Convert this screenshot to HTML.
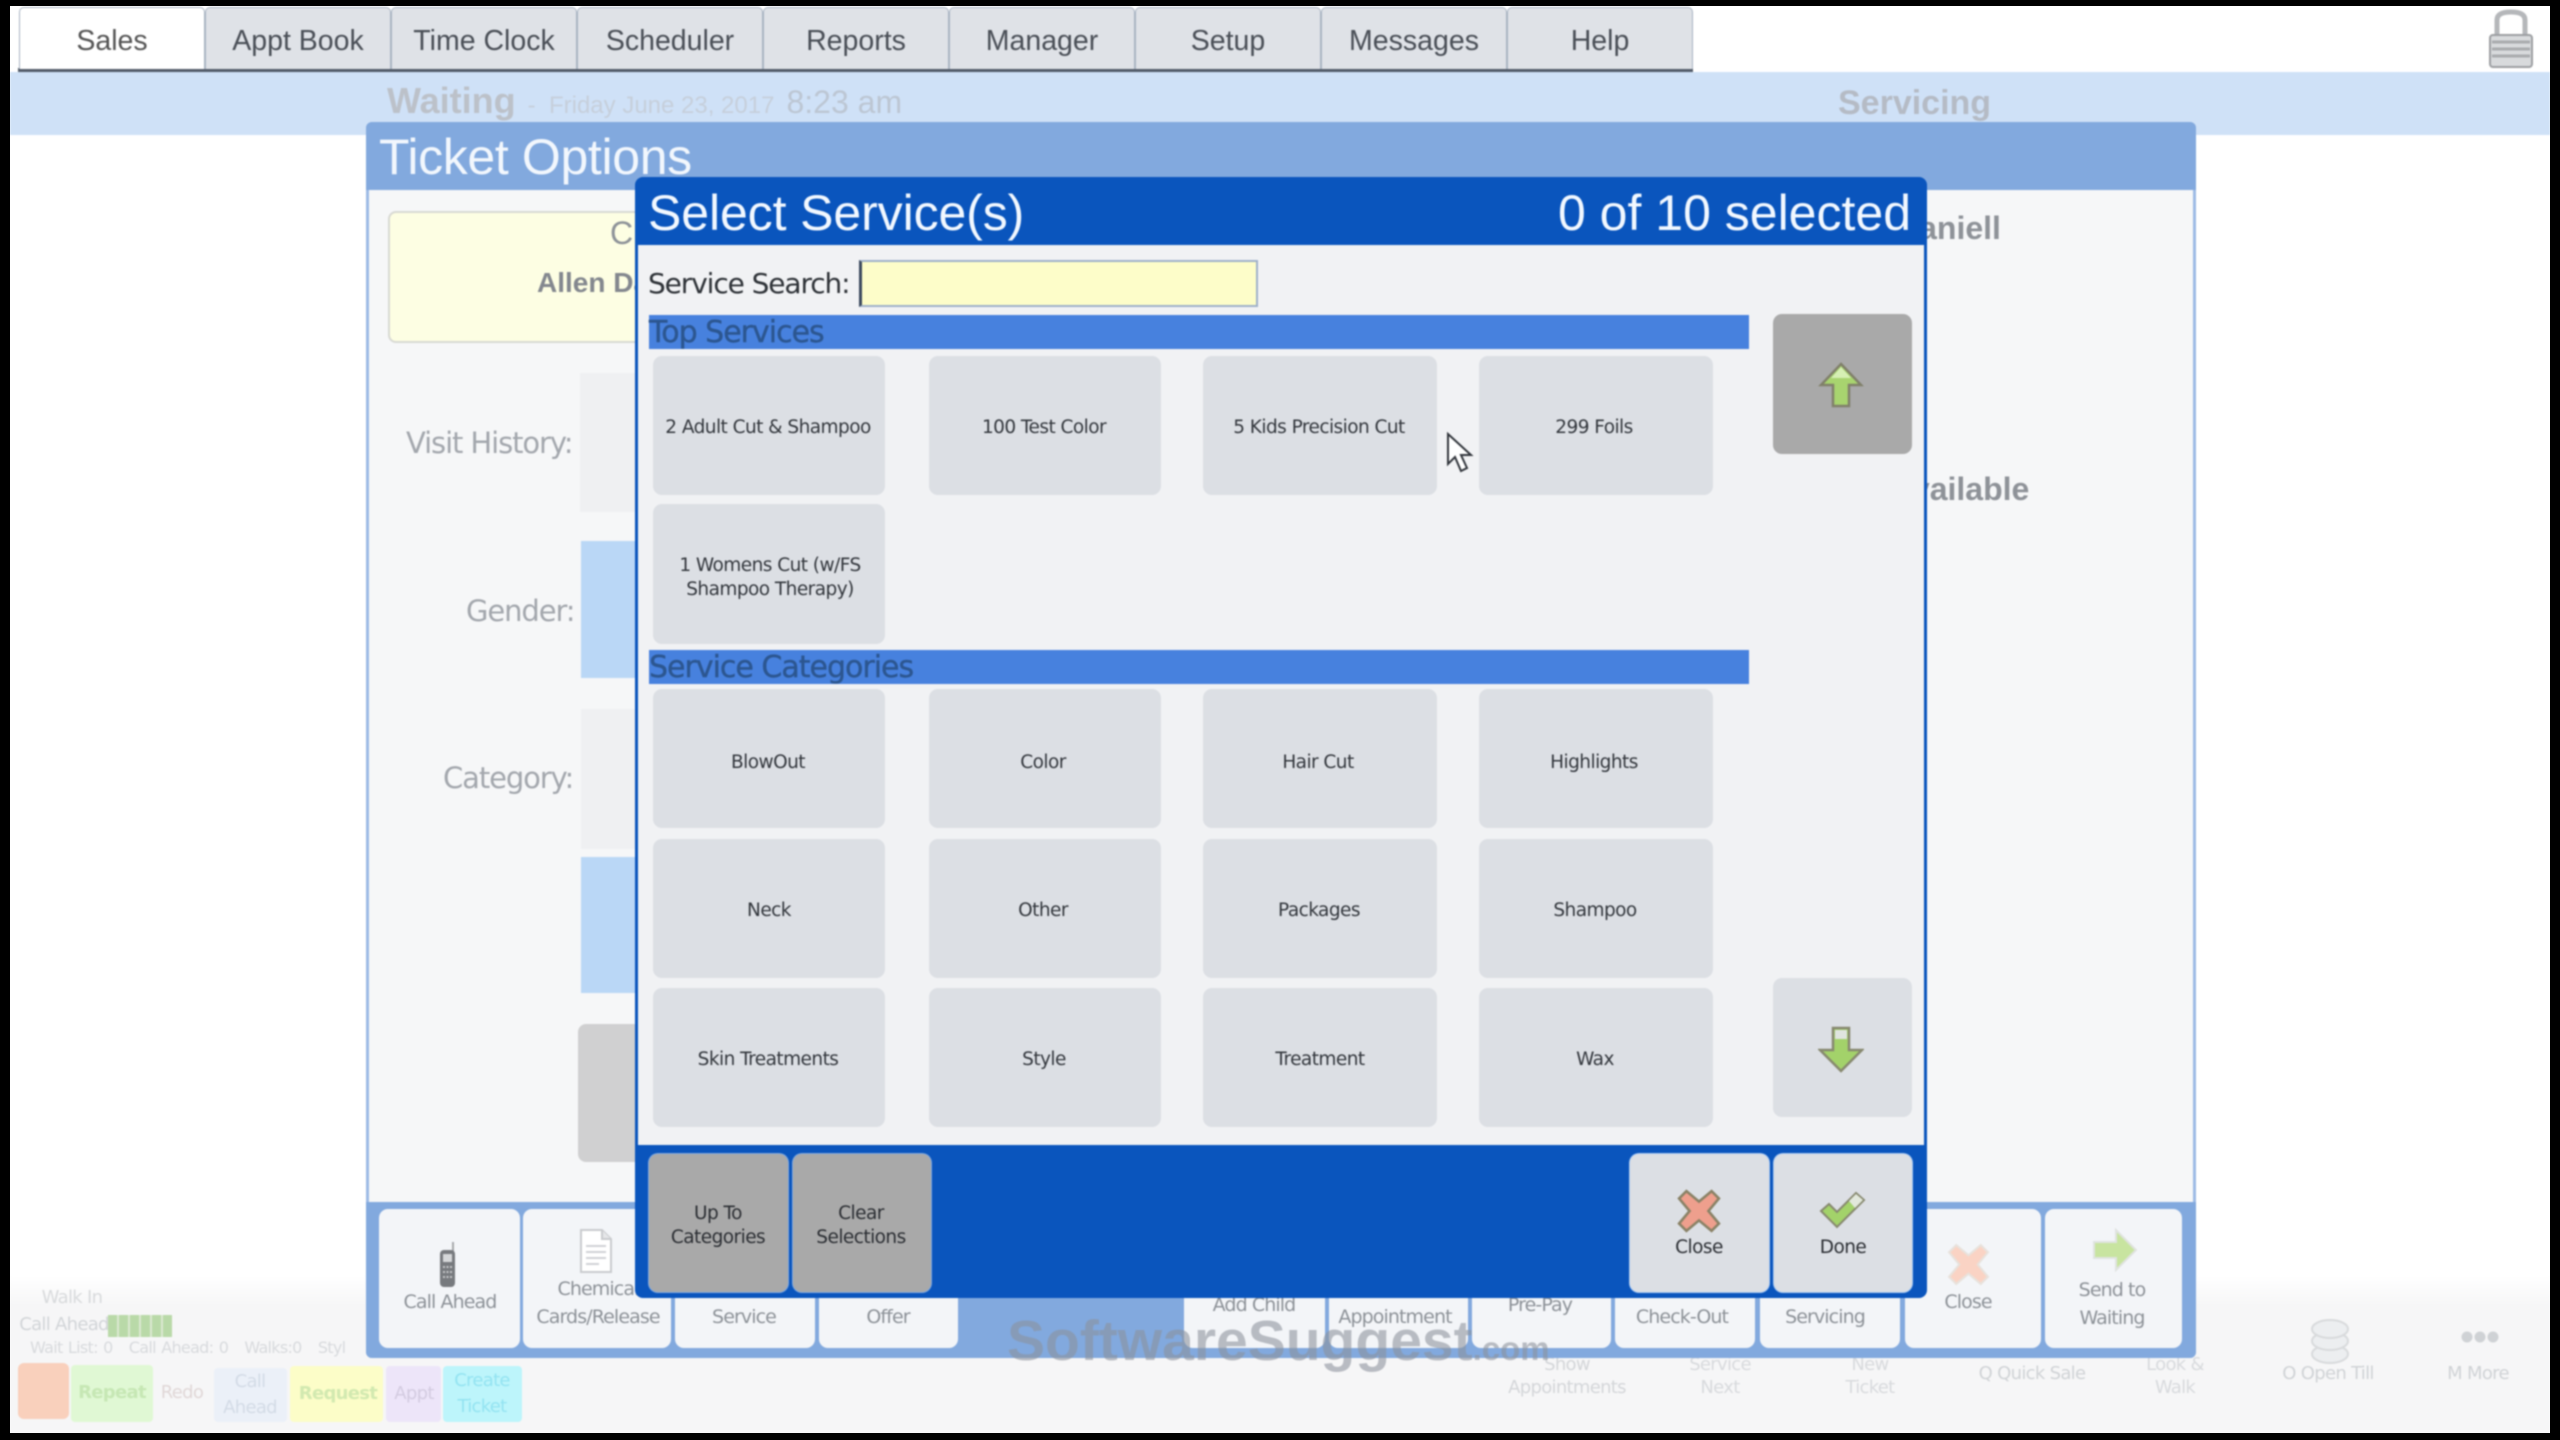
<!DOCTYPE html>
<html><head><meta charset="utf-8"><title>Select Service(s)</title>
<style>
html,body{margin:0;padding:0;background:#000}
body{width:2560px;height:1440px;overflow:hidden;position:relative;font-family:"Liberation Sans",sans-serif}
#s{position:absolute;left:10px;top:6px;width:2540px;height:1427px;background:#fff;overflow:hidden}
#p{position:absolute;left:-10px;top:-6px;width:2560px;height:1440px;filter:blur(.8px)}
.a{position:absolute}
.c{position:absolute;transform:translate(-50%,-50%);white-space:nowrap;text-align:center}
.tab{position:absolute;top:7px;height:61px;width:184px;background:#dfe2e7;border:1px solid #a9b4c2;border-bottom:none;border-radius:5px 5px 0 0;font-size:28.5px;color:#4a4f57;text-align:center;line-height:67px;box-sizing:content-box}
.b{position:absolute;background:#dcdfe4;border-radius:9px}
.d{font-family:"DejaVu Sans","Liberation Sans",sans-serif;font-size:18.5px;letter-spacing:-.55px;color:#33373d;line-height:24px}
.tb{position:absolute;top:1209px;height:139px;background:#f3f5f8;border-radius:9px}
.f{font-family:"DejaVu Sans","Liberation Sans",sans-serif;font-size:19px;letter-spacing:-.9px;color:#8d9298}
.l{font-family:"DejaVu Sans","Liberation Sans",sans-serif;font-size:29px;letter-spacing:-1.1px;color:#a3a7ad}
.k{font-family:"DejaVu Sans","Liberation Sans",sans-serif;font-size:18px;letter-spacing:-.7px;color:#dfe1e4;line-height:26px}
.h{font-family:"DejaVu Sans",sans-serif;font-size:30px;letter-spacing:-1px;color:#2c5690;white-space:nowrap;-webkit-text-stroke:.4px #2c5690}
</style></head><body><div id="s"><div id="p">

<!-- tabs -->
<div class="a" style="left:18px;top:68px;width:1675px;height:4px;background:#525b69"></div>
<div class="tab" style="left:19px;background:#fff;color:#555">Sales</div>
<div class="tab" style="left:205px">Appt Book</div>
<div class="tab" style="left:391px">Time Clock</div>
<div class="tab" style="left:577px">Scheduler</div>
<div class="tab" style="left:763px">Reports</div>
<div class="tab" style="left:949px">Manager</div>
<div class="tab" style="left:1135px">Setup</div>
<div class="tab" style="left:1321px">Messages</div>
<div class="tab" style="left:1507px">Help</div>

<!-- lock -->
<svg class="a" style="left:2486px;top:8px" width="50" height="62" viewBox="0 0 50 62">
<path d="M11 30V12Q11 4 25 4T39 12V30" fill="none" stroke="#b5b7ba" stroke-width="5"/>
<rect x="4" y="27" width="42" height="32" rx="3" fill="#d8dadc" stroke="#9d9fa2" stroke-width="2"/>
<path d="M6 34H44M6 41H44M6 48H44" stroke="#a9abae" stroke-width="3"/>
</svg>

<!-- band -->
<div class="a" style="left:10px;top:72px;width:2540px;height:63px;background:#cfe1f7"></div>
<div class="a" style="left:387px;top:80px;font-size:36px;font-weight:bold;color:#bcc1c9;white-space:nowrap">Waiting <span style="font-size:24px;font-weight:normal;color:#c6cfdb;margin-left:2px">-&nbsp; Friday June 23, 2017</span> <span style="font-size:32px;font-weight:normal;color:#bcc6d3;margin-left:2px">8:23 am</span></div>
<div class="a" style="left:1838px;top:84px;font-size:34px;font-weight:bold;color:#b5bbc5">Servicing</div>

<!-- bottom faded strip -->
<div class="a" style="left:10px;top:1275px;width:2540px;height:158px;background:linear-gradient(#fff 0,#f6f6f7 30px)"></div>
<div class="a" style="left:18px;top:1363px;width:51px;height:56px;background:#f9d0bc;border-radius:6px"></div>
<div class="a" style="left:71px;top:1365px;width:82px;height:57px;background:#e0f8d4;border-radius:4px"></div>
<div class="a" style="left:214px;top:1368px;width:73px;height:54px;background:#ebf0f8;border-radius:4px"></div>
<div class="a" style="left:290px;top:1366px;width:93px;height:56px;background:#fcfdc8;border-radius:4px"></div>
<div class="a" style="left:386px;top:1366px;width:55px;height:56px;background:#ede5f9;border-radius:4px"></div>
<div class="a" style="left:443px;top:1366px;width:79px;height:56px;background:#bdf5fb;border-radius:4px"></div>
<div class="c k" style="left:72px;top:1298px;color:#d8dadc">Walk In</div>
<div class="c k" style="left:64px;top:1325px;color:#d2d5d8">Call Ahead</div>
<div class="a" style="left:108px;top:1315px;width:64px;height:22px;background:repeating-linear-gradient(90deg,#b9d9a8 0 9px,#dbe9d2 9px 11px)"></div>
<div class="a k" style="left:30px;top:1335px;white-space:nowrap;color:#d8dadd;font-size:16px;word-spacing:1px">Wait List: 0 &nbsp; Call Ahead: 0 &nbsp; Walks:0 &nbsp; Styl</div>
<div class="c k" style="left:112px;top:1393px;color:#c6e7b4;font-weight:bold">Repeat</div>
<div class="c k" style="left:182px;top:1393px;color:#e0d7d7">Redo</div>
<div class="c k" style="left:250px;top:1395px;color:#d3dbe6">Call<br>Ahead</div>
<div class="c k" style="left:338px;top:1394px;color:#d2e9b0;font-weight:bold">Request</div>
<div class="c k" style="left:414px;top:1394px;color:#d3cbe0">Appt</div>
<div class="c k" style="left:482px;top:1394px;color:#93e3f1">Create<br>Ticket</div>
<div class="c k" style="left:1567px;top:1376px;color:#d4d6d9;line-height:23px">Show<br>Appointments</div>
<div class="c k" style="left:1720px;top:1376px;color:#d8dadd;line-height:23px">Service<br>Next</div>
<div class="c k" style="left:1870px;top:1376px;color:#d8dadd;line-height:23px">New<br>Ticket</div>
<div class="c k" style="left:2032px;top:1374px;color:#d0d3d6">Q Quick Sale</div>
<div class="c k" style="left:2175px;top:1376px;color:#d8dadd;line-height:23px">Look &amp;<br>Walk</div>
<div class="c k" style="left:2328px;top:1374px;color:#d0d3d6">O Open Till</div>
<div class="c k" style="left:2478px;top:1374px;color:#d0d3d6">M More</div>
<svg class="a" style="left:2310px;top:1318px" width="40" height="50" viewBox="0 0 40 50"><g fill="#eceef0" stroke="#d8dadc" stroke-width="2"><ellipse cx="20" cy="36" rx="18" ry="9"/><ellipse cx="20" cy="23" rx="18" ry="9"/><ellipse cx="20" cy="11" rx="18" ry="9"/></g></svg>
<svg class="a" style="left:2460px;top:1330px" width="40" height="14"><g fill="#cfd2d5"><circle cx="7" cy="7" r="5.5"/><circle cx="20" cy="7" r="5.5"/><circle cx="33" cy="7" r="5.5"/></g></svg>

<!-- Ticket Options panel -->
<div class="a" style="left:366px;top:122px;width:1830px;height:1236px;background:#f6f7f8;border-left:3px solid #9dbbe5;border-right:3px solid #9dbbe5;box-sizing:border-box;border-radius:6px 6px 6px 6px"></div>
<div class="a" style="left:366px;top:122px;width:1830px;height:68px;background:#82a9de;border-radius:6px 6px 0 0"></div>
<div class="a" style="left:379px;top:128px;font-size:50px;color:#f2f7fd;letter-spacing:-.35px;white-space:nowrap">Ticket Options</div>
<div class="a" style="left:388px;top:211px;width:300px;height:132px;background:#fdfee3;border:2px solid #d8d9d3;border-radius:8px;box-sizing:border-box"></div>
<div class="a" style="left:610px;top:215px;font-size:32px;color:#8d9298">C</div>
<div class="a" style="left:537px;top:267px;font-size:28px;font-weight:bold;color:#83878e;white-space:nowrap">Allen Daniell</div>
<div class="a l" style="left:406px;top:426px">Visit History:</div>
<div class="a l" style="left:466px;top:594px">Gender:</div>
<div class="a l" style="left:443px;top:761px">Category:</div>
<div class="a" style="left:580px;top:373px;width:80px;height:139px;background:#eff0f2"></div>
<div class="a" style="left:581px;top:541px;width:80px;height:137px;background:#bad7f6"></div>
<div class="a" style="left:581px;top:709px;width:80px;height:140px;background:#eff0f2"></div>
<div class="a" style="left:581px;top:857px;width:80px;height:136px;background:#bad7f6"></div>
<div class="a" style="left:578px;top:1024px;width:80px;height:138px;background:#d0d0d1;border-radius:8px"></div>
<div class="a" style="left:1896px;top:210px;font-size:32px;font-weight:bold;color:#8e9298;white-space:nowrap">Daniell</div>
<div class="a" style="left:1890px;top:471px;font-size:32px;font-weight:bold;color:#8e9298;white-space:nowrap">Available</div>

<!-- toolbar -->
<div class="a" style="left:366px;top:1202px;width:1830px;height:156px;background:#82a9de;border-radius:0 0 6px 6px"></div>
<div class="tb" style="left:379px;width:141px"></div>
<div class="tb" style="left:523px;width:148px"></div>
<div class="tb" style="left:675px;width:140px"></div>
<div class="tb" style="left:819px;width:139px"></div>
<div class="tb" style="left:1184px;width:141px"></div>
<div class="tb" style="left:1329px;width:139px"></div>
<div class="tb" style="left:1472px;width:139px"></div>
<div class="tb" style="left:1615px;width:140px"></div>
<div class="tb" style="left:1760px;width:140px"></div>
<div class="tb" style="left:1905px;width:136px"></div>
<div class="tb" style="left:2045px;width:137px"></div>
<svg class="a" style="left:438px;top:1242px" width="20" height="46" viewBox="0 0 20 46"><rect x="14" y="0" width="2" height="12" fill="#a6a8ab"/><rect x="2" y="8" width="15" height="37" rx="4" fill="#777a7e"/><rect x="5" y="12" width="9" height="8" fill="#d6d8da"/><path d="M5 25h9M5 30h9M5 35h9" stroke="#c4c6c9" stroke-width="2" stroke-dasharray="2 1.5"/></svg>
<svg class="a" style="left:579px;top:1229px" width="34" height="44" viewBox="0 0 34 44"><path d="M2 1H23L32 10V43H2Z" fill="#fff" stroke="#c9cbce" stroke-width="2"/><path d="M23 1V10H32" fill="#e5e6e8" stroke="#c9cbce" stroke-width="2"/><path d="M7 17H27M7 23H27M7 29H27M7 35H20" stroke="#d0d2d5" stroke-width="2"/></svg>
<div class="c f" style="left:450px;top:1302px">Call Ahead</div>
<div class="c f" style="left:598px;top:1303px;line-height:28px">Chemical<br>Cards/Release</div>
<div class="c f" style="left:744px;top:1317px">Service</div>
<div class="c f" style="left:888px;top:1317px">Offer</div>
<div class="c f" style="left:1254px;top:1305px">Add Child</div>
<div class="c f" style="left:1395px;top:1317px">Appointment</div>
<div class="c f" style="left:1540px;top:1305px">Pre-Pay</div>
<div class="c f" style="left:1682px;top:1317px">Check-Out</div>
<div class="c f" style="left:1825px;top:1317px">Servicing</div>
<div class="c f" style="left:1968px;top:1302px">Close</div>
<div class="c f" style="left:2112px;top:1304px;line-height:28px">Send to<br>Waiting</div>
<svg class="a" style="left:1947px;top:1243px" width="43" height="43" viewBox="0 0 42 42"><path d="M9 2L21 12L33 2L40 9L30 21L40 33L33 40L21 30L9 40L2 33L12 21L2 9Z" fill="#fad3c4" stroke="#e8e2dc" stroke-width="2"/></svg>
<svg class="a" style="left:2092px;top:1227px" width="46" height="46" viewBox="0 0 46 46"><path d="M2 15H24V3L44 23L24 43V31H2Z" fill="#c8e4a0" stroke="#dfe3e0" stroke-width="2"/></svg>

<!-- watermark -->
<div class="a" style="left:1007px;top:1308px;font-size:57px;font-weight:bold;color:rgba(140,145,155,.58);white-space:nowrap;letter-spacing:0">SoftwareSuggest<span style="font-size:33px">.com</span></div>

<!-- Select Service(s) modal -->
<div class="a" style="left:635px;top:177px;width:1292px;height:1121px;background:#0a55bd;border-radius:8px"></div>
<div class="a" style="left:638px;top:245px;width:1286px;height:900px;background:#f1f2f4"></div>
<div class="a" style="left:648px;top:184px;font-size:50px;color:#f2f8ff;letter-spacing:-.1px;white-space:nowrap">Select Service(s)</div>
<div class="a" style="right:649px;top:184px;font-size:50px;color:#f2f8ff;letter-spacing:0;white-space:nowrap">0 of 10 selected</div>
<div class="a" style="left:648px;top:267px;font-family:'DejaVu Sans',sans-serif;font-size:28px;letter-spacing:-1.1px;color:#2f3338;white-space:nowrap">Service Search:</div>
<div class="a" style="left:859px;top:260px;width:399px;height:47px;background:#fdfdc9;border:2px solid #9fb1c9;box-sizing:border-box;border-left:3px solid #3c4a5e"></div>

<div class="a" style="left:649px;top:315px;width:1100px;height:34px;background:#4781de"></div>
<div class="a h" style="left:649px;top:315px">Top Services</div>
<div class="a" style="left:649px;top:650px;width:1100px;height:34px;background:#4781de"></div>
<div class="a h" style="left:649px;top:650px">Service Categories</div>

<div class="b" style="left:653px;top:356px;width:232px;height:139px"></div>
<div class="b" style="left:929px;top:356px;width:232px;height:139px"></div>
<div class="b" style="left:1203px;top:356px;width:234px;height:139px"></div>
<div class="b" style="left:1479px;top:356px;width:234px;height:139px"></div>
<div class="b" style="left:653px;top:504px;width:232px;height:140px"></div>

<div class="b" style="left:653px;top:689px;width:232px;height:139px"></div>
<div class="b" style="left:929px;top:689px;width:232px;height:139px"></div>
<div class="b" style="left:1203px;top:689px;width:234px;height:139px"></div>
<div class="b" style="left:1479px;top:689px;width:234px;height:139px"></div>
<div class="b" style="left:653px;top:839px;width:232px;height:139px"></div>
<div class="b" style="left:929px;top:839px;width:232px;height:139px"></div>
<div class="b" style="left:1203px;top:839px;width:234px;height:139px"></div>
<div class="b" style="left:1479px;top:839px;width:234px;height:139px"></div>
<div class="b" style="left:653px;top:988px;width:232px;height:139px"></div>
<div class="b" style="left:929px;top:988px;width:232px;height:139px"></div>
<div class="b" style="left:1203px;top:988px;width:234px;height:139px"></div>
<div class="b" style="left:1479px;top:988px;width:234px;height:139px"></div>

<div class="c d" style="left:768px;top:428px">2 Adult Cut &amp; Shampoo</div>
<div class="c d" style="left:1044px;top:428px">100 Test Color</div>
<div class="c d" style="left:1319px;top:428px">5 Kids Precision Cut</div>
<div class="c d" style="left:1594px;top:428px">299 Foils</div>
<div class="c d" style="left:770px;top:578px">1 Womens Cut (w/FS<br>Shampoo Therapy)</div>
<div class="c d" style="left:768px;top:763px">BlowOut</div>
<div class="c d" style="left:1043px;top:763px">Color</div>
<div class="c d" style="left:1318px;top:763px">Hair Cut</div>
<div class="c d" style="left:1594px;top:763px">Highlights</div>
<div class="c d" style="left:769px;top:911px">Neck</div>
<div class="c d" style="left:1043px;top:911px">Other</div>
<div class="c d" style="left:1319px;top:911px">Packages</div>
<div class="c d" style="left:1595px;top:911px">Shampoo</div>
<div class="c d" style="left:768px;top:1060px">Skin Treatments</div>
<div class="c d" style="left:1044px;top:1060px">Style</div>
<div class="c d" style="left:1320px;top:1060px">Treatment</div>
<div class="c d" style="left:1595px;top:1060px">Wax</div>

<div class="b" style="left:1773px;top:314px;width:139px;height:140px;background:#a9a9a9"></div>
<div class="b" style="left:1773px;top:978px;width:139px;height:139px"></div>
<svg class="a" style="left:1818px;top:361px" width="46" height="50" viewBox="0 0 46 50"><path d="M23 3L43 24H31V45H15V24H3Z" fill="#a8d46f" stroke="#80806a" stroke-width="2.5"/><path d="M23 6L33 17H13Z" fill="#d6efb4"/></svg>
<svg class="a" style="left:1818px;top:1025px" width="46" height="50" viewBox="0 0 46 50"><path d="M15 3H31V25H44L23 46L2 25H15Z" fill="#a3d26a" stroke="#87896f" stroke-width="2.5"/><path d="M17 5H29V14H17Z" fill="#dfe4df"/></svg>

<div class="b" style="left:649px;top:1154px;width:139px;height:138px;background:#a9a9a9;box-shadow:0 0 0 1px #7fa8e0"></div>
<div class="b" style="left:793px;top:1154px;width:138px;height:138px;background:#a9a9a9;box-shadow:0 0 0 1px #7fa8e0"></div>
<div class="b" style="left:1630px;top:1154px;width:139px;height:138px;box-shadow:0 0 0 1px #a8c8f2"></div>
<div class="b" style="left:1774px;top:1154px;width:138px;height:138px;box-shadow:0 0 0 1px #a8c8f2"></div>
<div class="c d" style="left:718px;top:1226px;color:#2b2e33">Up To<br>Categories</div>
<div class="c d" style="left:861px;top:1226px;color:#2b2e33">Clear<br>Selections</div>
<div class="c d" style="left:1699px;top:1248px;color:#2b2e33">Close</div>
<div class="c d" style="left:1843px;top:1248px;color:#2b2e33">Done</div>
<svg class="a" style="left:1677px;top:1189px" width="44" height="44" viewBox="0 0 42 42"><path d="M9 2L21 12L33 2L40 9L30 21L40 33L33 40L21 30L9 40L2 33L12 21L2 9Z" fill="#ee9f8d" stroke="#8a8266" stroke-width="2.5"/></svg>
<svg class="a" style="left:1819px;top:1191px" width="47" height="40" viewBox="0 0 47 40"><path d="M2 20L10 13L18 21L37 2L45 9L18 36Z" fill="#a3d26a" stroke="#87896f" stroke-width="2"/><path d="M37 3L44 9L36 17L30 10Z" fill="#e2e8dc"/></svg>

<!-- cursor -->
<svg class="a" style="left:1446px;top:432px" width="28" height="42" viewBox="0 0 28 42"><path d="M2 2V32L9 25L15 39L21 36L15 23H25Z" fill="#fff" stroke="#33373d" stroke-width="2"/></svg>

</div></div></body></html>
